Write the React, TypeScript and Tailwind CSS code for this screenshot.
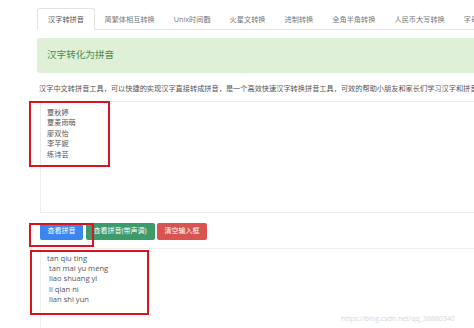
import React from "react";

const tabs = [
  "汉字转拼音",
  "简繁体相互转换",
  "Unix时间戳",
  "火星文转换",
  "进制转换",
  "全角半角转换",
  "人民币大写转换",
  "字母大小写转换",
];

const names = ["覃秋婷", "覃麦雨萌", "廖双怡", "李芊妮", "练诗芸"];
const pinyin = ["tan qiu ting", " tan mai yu meng", " liao shuang yi", " li qian ni", " lian shi yun"];

export default function App() {
  return (
    <div
      className="relative h-[328px] w-[474px] overflow-hidden bg-white"
      style={{ fontFamily: '"Open Sans", "Noto Sans CJK SC", sans-serif' }}
    >
      <div className="w-[560px] pl-[37px] pt-[8px]">
        {/* tabs */}
        <ul className="flex h-[22px] border-b border-[#e3e3e3]">
          {tabs.map((t, i) => (
            <li
              key={t}
              className={
                i === 0
                  ? "flex h-[22px] shrink-0 items-center whitespace-nowrap rounded-t-[3px] border border-b-white border-[#e3e3e3] bg-white px-[10px] text-[7.2px] text-[#555]"
                  : "flex h-[22px] shrink-0 items-center whitespace-nowrap px-[9.5px] text-[7.2px] text-[#777]"
              }
            >
              {t}
            </li>
          ))}
        </ul>

        {/* alert */}
        <div className="mt-[8px] flex h-[35px] items-center rounded-[3px] bg-[#dff0d8] pl-[10px] text-[9.6px] text-[#4f8a4f]">
          汉字转化为拼音
        </div>

        {/* description */}
        <p className="mt-[10px] whitespace-nowrap pl-[2px] text-[7.2px] leading-[10px] text-[#555]">
          汉字中文转拼音工具，可以快捷的实现汉字直接转成拼音，是一个高效快速汉字转换拼音工具，可效的帮助小朋友和家长们学习汉字和拼音。
        </p>

        {/* textarea */}
        <div className="ml-[3px] mt-[8px] h-[112px] border border-[#ececec] pl-[6px] pt-[5px] text-[7.2px] leading-[10.4px] text-[#555]">
          {names.map((n) => (
            <div key={n}>{n}</div>
          ))}
        </div>

        {/* buttons */}
        <div className="ml-[3px] mt-[10px] flex gap-[2.5px] text-[7px] text-white">
          <button className="h-[17px] w-[43px] rounded-[2px] bg-[#3a86ee]">查看拼音</button>
          <button className="h-[17px] w-[69px] rounded-[2px] bg-[#3d9a6b]">查看拼音(带声调)</button>
          <button className="h-[17px] w-[50px] rounded-[2px] bg-[#d9534f]">清空输入框</button>
        </div>

        {/* output */}
        <div className="ml-[3px] mt-[8px] h-[80px] border-l border-t border-[#f0f0f0] pl-[6px] pt-[4px] text-[7.6px] leading-[10.2px] text-[#555]">
          {pinyin.map((p) => (
            <div key={p} className="whitespace-pre">
              {p}
            </div>
          ))}
        </div>
      </div>

      {/* annotation boxes */}
      <div className="absolute left-[29px] top-[101px] h-[66px] w-[81px] border-2 border-[#d7141f]" />
      <div className="absolute left-[29px] top-[223px] h-[24px] w-[65px] border-2 border-[#d7141f]" />
      <div className="absolute left-[30px] top-[250px] h-[65px] w-[119px] border-2 border-[#d7141f]" />

      {/* watermark */}
      <div className="absolute left-[341px] top-[314px] text-[7px] text-[#d6d6d6]">
        https://blog.csdn.net/qq_38880340
      </div>
    </div>
  );
}
